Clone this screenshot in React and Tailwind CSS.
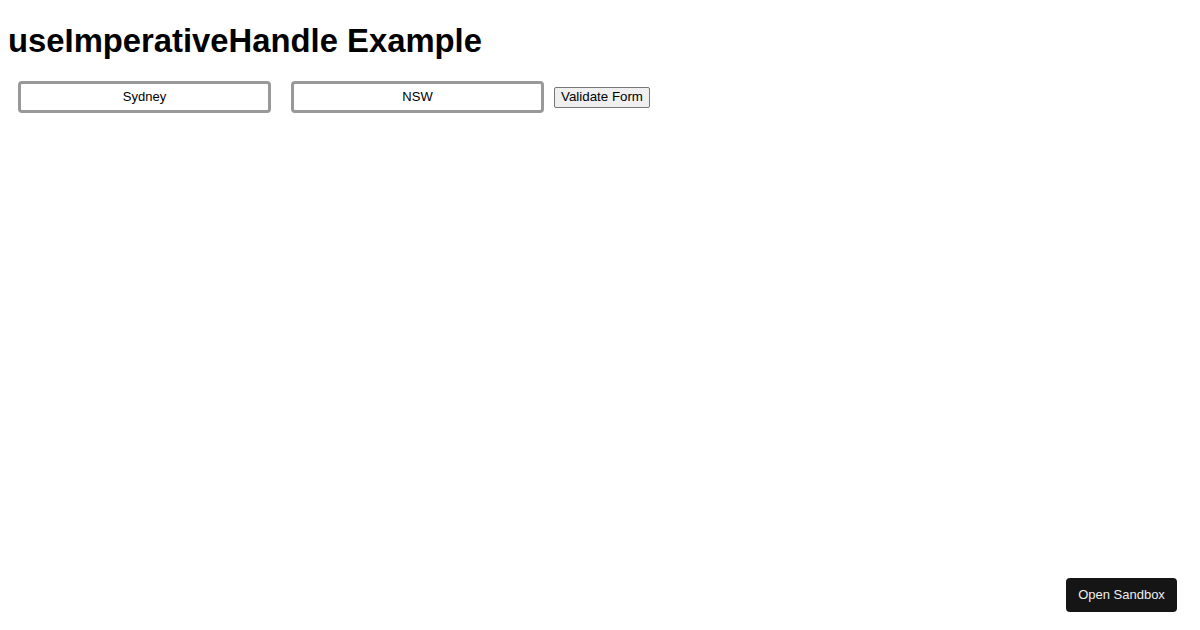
import React from "react";

const App = () => {
  return (
    <div
      className="relative min-h-[630px] bg-white text-black px-2"
      style={{ fontFamily: '"Liberation Sans", Arial, sans-serif' }}
    >
      <h1 className="pt-[22px] text-[32.8px] leading-[37px] font-bold">
        useImperativeHandle Example
      </h1>
      <div className="mt-[22px] flex items-center">
        <input
          className="ml-[10px] mr-[10px] w-[253px] h-[32px] border-[3px] border-[#999] rounded-[4px] pb-px text-center text-[13px] outline-none"
          defaultValue="Sydney"
        />
        <input
          className="ml-[10px] mr-[10px] w-[253px] h-[32px] border-[3px] border-[#999] rounded-[4px] pb-px text-center text-[13px] outline-none"
          defaultValue="NSW"
        />
        <button className="h-[21px] w-[96px] border border-[#767676] rounded-[2px] bg-[#efefef] text-[13.33px] leading-none">
          Validate Form
        </button>
      </div>
      <button className="absolute right-[23px] bottom-[18px] h-[34px] w-[111px] rounded-[4px] bg-[#151515] text-[#eee] text-[13px]">
        Open Sandbox
      </button>
    </div>
  );
};

export default App;
